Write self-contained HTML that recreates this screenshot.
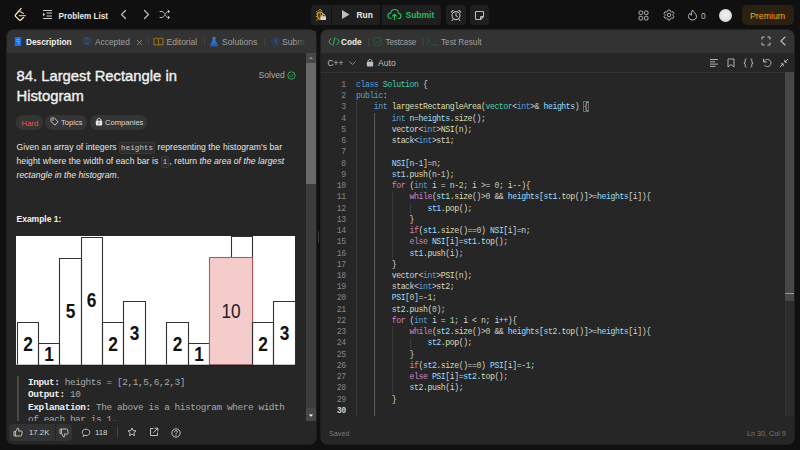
<!DOCTYPE html>
<html><head><meta charset="utf-8">
<style>
*{box-sizing:border-box;margin:0;padding:0}
html,body{width:800px;height:450px;overflow:hidden;background:#101010;font-family:"Liberation Sans",sans-serif;color:#eee}
.a{position:absolute}
.topbar{left:0;top:0;width:800px;height:29px;background:#101010}
.panel{background:#262626;border-radius:6px;overflow:hidden;box-shadow:0 0 0 0.5px #2e2e2e}
.tabs{left:0;top:0;right:0;height:23px;background:#333333}
.tab{position:absolute;top:0;height:23px;line-height:23px;font-size:8.6px;color:#9e9e9e;white-space:nowrap}
.sep{position:absolute;top:8px;width:1px;height:8px;background:#424242}
.btn{background:#1f1f1f;border-radius:3px}
.mono{font-family:"Liberation Mono",monospace}
.code{left:356px;top:79px;font-size:8.2px;letter-spacing:-0.45px;line-height:11.24px;white-space:pre;color:#d4d4d4}
.ln{left:320px;top:79px;width:25.7px;text-align:right;font-size:8.2px;letter-spacing:-0.45px;line-height:11.24px;white-space:pre;color:#858585}
.k{color:#569cd6}.t{color:#4ec9b0}.f{color:#dcdcaa}.v{color:#9cdcfe}.c{color:#c586c0}.n{color:#b5cea8}.b1{color:#ffd700}.b2{color:#da70d6}.b3{color:#179fff}
.code1{font-family:"Liberation Mono",monospace;font-size:7.5px;background:#2e2e2e;border:0.5px solid #3a3a3a;border-radius:2px;padding:1px 1px;color:#c8c8c8}
</style></head><body>
<!-- top bar -->
<div class="a topbar"></div>
<!-- logo -->
<svg class="a" style="left:12px;top:5px" width="16" height="18" viewBox="12 5 16 18">
  <path d="M21.2 8.4L15.6 14.7C15.1 15.2 15.1 15.9 15.6 16.4L18.8 19.6C19.5 20.3 20.6 20.3 21.3 19.6L23.6 17.6" fill="none" stroke="#f3e7cf" stroke-width="1.3" stroke-linecap="round" stroke-linejoin="round"/>
  <path d="M19.4 10.9L23.4 13.4" fill="none" stroke="#e8c27a" stroke-width="1.2" stroke-linecap="round"/>
  <path d="M19.2 15.6H25.4" fill="none" stroke="#d6b47a" stroke-width="1.2" stroke-linecap="round"/>
</svg>
<!-- problem list icon -->
<svg class="a" style="left:42px;top:9px" width="11" height="11" viewBox="0 0 11 11">
  <path d="M1 1.5H10M4.5 4H10M4.5 7H10M1 9.5H10" stroke="#cfcfcf" stroke-width="1.1"/>
  <path d="M1 3.6L3 5.5L1 7.4Z" fill="#cfcfcf"/>
</svg>
<div class="a" style="left:58.5px;top:10px;font-size:8.2px;line-height:13px;font-weight:bold;color:#e8e8e8">Problem List</div>
<svg class="a" style="left:119px;top:9px" width="10" height="11" viewBox="0 0 10 11"><path d="M6.5 1.5L2.5 5.5L6.5 9.5" fill="none" stroke="#bdbdbd" stroke-width="1.2" stroke-linecap="round" stroke-linejoin="round"/></svg>
<svg class="a" style="left:141px;top:9px" width="10" height="11" viewBox="0 0 10 11"><path d="M3.5 1.5L7.5 5.5L3.5 9.5" fill="none" stroke="#bdbdbd" stroke-width="1.2" stroke-linecap="round" stroke-linejoin="round"/></svg>
<svg class="a" style="left:159px;top:9px" width="12" height="11" viewBox="0 0 12 11">
  <path d="M1 2.5H3.2C5.5 2.5 6.5 8.5 8.8 8.5H10.5M1 8.5H3.2C4.2 8.5 4.8 7.5 5.3 6.5M6.7 4.5C7.2 3.5 7.8 2.5 8.8 2.5H10.5M9 1L10.5 2.5L9 4M9 7L10.5 8.5L9 10" fill="none" stroke="#bdbdbd" stroke-width="1" stroke-linecap="round" stroke-linejoin="round"/>
</svg>

<!-- center buttons -->
<div class="a btn" style="left:311px;top:5px;width:20px;height:19.5px;border-radius:4px 0 0 4px"></div>
<svg class="a" style="left:314px;top:8px" width="14" height="14" viewBox="314 8 14 14">
  <path d="M318.5 11.2C318.5 10.2 319.3 9.6 320.2 9.6C321.1 9.6 321.8 10.2 321.8 11.2" fill="none" stroke="#e0a826" stroke-width="1"/>
  <ellipse cx="320.2" cy="15.6" rx="2.6" ry="3.6" fill="none" stroke="#e0a826" stroke-width="1.1"/>
  <path d="M317.6 14H316.3M317.6 16.6H316.2M317.8 19L316.6 20.4M316.6 11.6L317.8 12.6M320.2 12V19" fill="none" stroke="#e0a826" stroke-width="0.9" stroke-linecap="round"/>
  <rect x="320.6" y="16.2" width="5.4" height="3.8" rx="0.6" fill="#d6d6d6"/>
  <path d="M321.7 16.4V15.4C321.7 13.7 324.9 13.7 324.9 15.4V16.4" fill="none" stroke="#d6d6d6" stroke-width="0.9"/>
</svg>
<div class="a btn" style="left:332px;top:5px;width:48px;height:19.5px;border-radius:0"></div>
<svg class="a" style="left:341px;top:9px" width="9" height="11" viewBox="0 0 9 11"><path d="M1 1L8.5 5.5L1 10Z" fill="#bdbdbd"/></svg>
<div class="a" style="left:356.5px;top:9px;font-size:8.4px;line-height:13px;font-weight:bold;color:#e8e8e8">Run</div>
<div class="a btn" style="left:381.5px;top:5px;width:59.5px;height:19.5px;border-radius:0 4px 4px 0"></div>
<svg class="a" style="left:387px;top:8px" width="15" height="13" viewBox="0 0 15 13">
  <path d="M4 10.5H3.5C2 10.5 1 9.3 1 7.8C1 6.3 2.2 5.2 3.6 5.2C4 3 5.6 1.5 7.6 1.5C9.8 1.5 11.4 3.2 11.5 5.3C13 5.4 14 6.5 14 8C14 9.4 12.9 10.5 11.5 10.5H11" fill="none" stroke="#2cbb5d" stroke-width="1.2" stroke-linecap="round"/>
  <path d="M7.5 11.5V6.2M5.6 8L7.5 6.1L9.4 8" fill="none" stroke="#2cbb5d" stroke-width="1.2" stroke-linecap="round" stroke-linejoin="round"/>
</svg>
<div class="a" style="left:405.5px;top:9px;font-size:8.5px;line-height:13px;font-weight:bold;color:#2cbb5d">Submit</div>
<div class="a btn" style="left:446px;top:5px;width:19.5px;height:19.5px;border-radius:4px"></div>
<svg class="a" style="left:449.5px;top:8.5px" width="12" height="12" viewBox="0 0 12 12">
  <circle cx="6" cy="6.6" r="4" fill="none" stroke="#bdbdbd" stroke-width="1.1"/>
  <path d="M6 4.6V6.8L7.3 7.6M1.3 3.2L3 1.5M10.7 3.2L9 1.5M3 10.6L2.2 11.4M9 10.6L9.8 11.4" fill="none" stroke="#bdbdbd" stroke-width="1.1" stroke-linecap="round"/>
</svg>
<div class="a btn" style="left:469.5px;top:5px;width:19.5px;height:19.5px;border-radius:4px"></div>
<svg class="a" style="left:474px;top:9.5px" width="11" height="11" viewBox="0 0 11 11">
  <path d="M1.5 2.2C1.5 1.8 1.8 1.5 2.2 1.5H8.8C9.2 1.5 9.5 1.8 9.5 2.2V6.5L6.5 9.5H2.2C1.8 9.5 1.5 9.2 1.5 8.8Z M6.5 9.5V7.2C6.5 6.8 6.8 6.5 7.2 6.5H9.5" fill="none" stroke="#bdbdbd" stroke-width="1.1" stroke-linejoin="round"/>
</svg>

<!-- right icons -->
<svg class="a" style="left:638px;top:9.5px" width="11" height="11" viewBox="0 0 11 11">
  <rect x="1" y="1" width="3.6" height="3.6" rx="1.2" fill="none" stroke="#bdbdbd" stroke-width="1"/>
  <rect x="6.4" y="1" width="3.6" height="3.6" rx="1.2" fill="none" stroke="#bdbdbd" stroke-width="1"/>
  <rect x="1" y="6.4" width="3.6" height="3.6" rx="1.2" fill="none" stroke="#bdbdbd" stroke-width="1"/>
  <rect x="6.4" y="6.4" width="3.6" height="3.6" rx="1.2" fill="none" stroke="#bdbdbd" stroke-width="1"/>
</svg>
<svg class="a" style="left:662.5px;top:9px" width="12" height="12" viewBox="0 0 12 12">
  <path d="M5 1H7L7.4 2.4L8.6 3.1L10 2.7L11 4.4L10 5.4V6.6L11 7.6L10 9.3L8.6 8.9L7.4 9.6L7 11H5L4.6 9.6L3.4 8.9L2 9.3L1 7.6L2 6.6V5.4L1 4.4L2 2.7L3.4 3.1L4.6 2.4Z" fill="none" stroke="#bdbdbd" stroke-width="0.9" stroke-linejoin="round"/>
  <circle cx="6" cy="6" r="1.7" fill="none" stroke="#bdbdbd" stroke-width="0.9"/>
</svg>
<svg class="a" style="left:687px;top:9px" width="11" height="12" viewBox="0 0 11 12">
  <path d="M5.5 1C6 3 9.5 4.5 9.5 7.5C9.5 9.7 7.7 11 5.5 11C3.3 11 1.5 9.7 1.5 7.5C1.5 6 2.3 5 3 4.3C3.2 5.5 3.8 6.2 4.3 6.3C4.3 4.2 4.8 2.5 5.5 1Z" fill="none" stroke="#bdbdbd" stroke-width="1" stroke-linejoin="round"/>
</svg>
<div class="a" style="left:701px;top:10px;font-size:8.3px;line-height:13px;color:#bdbdbd">0</div>
<div class="a" style="left:719px;top:8.5px;width:13px;height:13px;border-radius:50%;background:radial-gradient(circle at 50% 45%,#f2f2f2 0,#dedede 60%,#c4c4c4 100%)"></div>
<div class="a" style="left:741.5px;top:5px;width:52px;height:19.5px;border-radius:5px;background:#2a2113"></div>
<div class="a" style="left:750px;top:10px;font-size:8.8px;line-height:13px;color:#f5a623">Premium</div>


<!-- left panel -->
<div class="a panel" style="left:7px;top:30px;width:309px;height:413.5px">
  <div class="a tabs"></div>
</div>
<!-- left tabs -->
<svg class="a" style="left:14px;top:36px" width="8" height="11" viewBox="0 0 8 11">
  <path d="M1.2 1H6.8C7 1 7.2 1.2 7.2 1.4V9.6C7.2 9.8 7 10 6.8 10H1.2C1 10 0.8 9.8 0.8 9.6V1.4C0.8 1.2 1 1 1.2 1Z" fill="#1f6fe0"/>
  <path d="M2.6 3.6H5.4M2.6 5.5H5.4M4 7.4H5.4" stroke="#9cc4ff" stroke-width="0.8"/>
</svg>
<div class="a" style="left:26px;top:35.5px;font-size:8.3px;line-height:13px;font-weight:bold;color:#f0f0f0">Description</div>
<svg class="a" style="left:81px;top:35px" width="12" height="12" viewBox="0 0 12 12">
  <circle cx="6" cy="6" r="5.2" fill="#323c50"/>
  <path d="M3.5 4.5C4.5 3 7 3 8 4.5M4 7.8C5 8.8 7 8.8 8 7.5" fill="none" stroke="#465878" stroke-width="1"/>
</svg>
<div class="a" style="left:95px;top:35.5px;font-size:8.4px;line-height:13px;color:#a0a0a0">Accepted</div>
<svg class="a" style="left:135.5px;top:38.5px" width="7" height="7" viewBox="0 0 7 7"><path d="M1 1L6 6M6 1L1 6" stroke="#8a8a8a" stroke-width="0.9"/></svg>
<div class="sep" style="left:148px;top:38px"></div>
<svg class="a" style="left:153px;top:37px" width="11" height="9" viewBox="0 0 11 9">
  <path d="M1 1.2H4.2C4.8 1.2 5.5 1.7 5.5 2.3C5.5 1.7 6.2 1.2 6.8 1.2H10V7.8H6.8C6.2 7.8 5.5 8.2 5.5 8.2C5.5 8.2 4.8 7.8 4.2 7.8H1Z M5.5 2.3V8.2" fill="none" stroke="#957020" stroke-width="1.1" stroke-linejoin="round"/>
</svg>
<div class="a" style="left:166.5px;top:35.5px;font-size:8.5px;line-height:13px;color:#a0a0a0">Editorial</div>
<div class="sep" style="left:204px;top:38px"></div>
<svg class="a" style="left:209px;top:36px" width="10" height="11" viewBox="0 0 10 11">
  <defs><linearGradient id="fl" x1="0" y1="0" x2="0" y2="1"><stop offset="0" stop-color="#2a8fd0"/><stop offset="1" stop-color="#2a55b0"/></linearGradient></defs>
  <path d="M3.6 1H6.4V4L9 9.2C9.3 9.8 8.9 10.4 8.2 10.4H1.8C1.1 10.4 0.7 9.8 1 9.2L3.6 4Z" fill="url(#fl)"/>
</svg>
<div class="a" style="left:222px;top:35.5px;font-size:8.6px;line-height:13px;color:#a0a0a0">Solutions</div>
<div class="sep" style="left:264px;top:38px"></div>
<svg class="a" style="left:269.5px;top:36px" width="11" height="11" viewBox="0 0 11 11">
  <circle cx="5.5" cy="5.5" r="4.8" fill="#2c3a52"/>
  <path d="M5.5 3V5.8L7.2 6.8" fill="none" stroke="#4a5f85" stroke-width="1"/>
</svg>
<div class="a" style="left:282px;top:35.5px;font-size:8.6px;line-height:13px;color:#a0a0a0;width:30px;overflow:hidden;white-space:nowrap">Submissions</div>
<div class="a" style="left:294px;top:31px;width:22px;height:21px;background:linear-gradient(90deg,rgba(51,51,51,0),#333 55%)"></div>

<!-- scrollbar -->
<div class="a" style="left:306px;top:53px;width:10px;height:368px;background:#3c3c3c"></div>
<div class="a" style="left:306px;top:53px;width:10px;height:10px;background:#474747"></div>
<div class="a" style="left:306px;top:63px;width:10px;height:121px;background:#696969"></div>
<svg class="a" style="left:306px;top:53px" width="10" height="10" viewBox="0 0 10 10"><path d="M3 6L5 4L7 6Z" fill="#9a9a9a"/></svg>
<div class="a" style="left:306px;top:408px;width:10px;height:13px;background:#474747"></div>
<svg class="a" style="left:306px;top:410px" width="10" height="10" viewBox="0 0 10 10"><path d="M2.8 4.5L5 6.8L7.2 4.5Z" fill="#ffffff"/></svg>

<!-- title -->
<div class="a" style="left:16.5px;top:67px;font-size:14.8px;line-height:19.6px;color:#f2f2f2;-webkit-text-stroke:0.35px #f2f2f2;white-space:nowrap">84. Largest Rectangle in<br>Histogram</div>
<div class="a" style="left:258.5px;top:69.3px;font-size:8.6px;line-height:13px;color:#a8a8a8">Solved</div>
<svg class="a" style="left:287px;top:71px" width="9" height="9" viewBox="0 0 9 9">
  <circle cx="4.5" cy="4.5" r="3.7" fill="none" stroke="#2cbb5d" stroke-width="0.9"/>
  <path d="M2.8 4.6L4 5.8L6.3 3.4" fill="none" stroke="#2cbb5d" stroke-width="0.9" stroke-linecap="round" stroke-linejoin="round"/>
</svg>

<!-- badges -->
<div class="a" style="left:16px;top:115px;width:27px;height:14.5px;border-radius:7px;background:#353535"></div>
<div class="a" style="left:21.5px;top:116.5px;font-size:7.8px;line-height:13px;color:#e05a5a">Hard</div>
<div class="a" style="left:45px;top:115px;width:41.5px;height:14.5px;border-radius:7px;background:#353535"></div>
<svg class="a" style="left:49.5px;top:117px" width="9" height="9" viewBox="0 0 9 9">
  <path d="M1 1.5V4.3L4.9 8.2L8.2 4.9L4.3 1H1.5Z" fill="none" stroke="#dadada" stroke-width="0.9" stroke-linejoin="round"/>
  <circle cx="3" cy="3" r="0.7" fill="#dadada"/>
</svg>
<div class="a" style="left:61px;top:116px;font-size:7.6px;line-height:13px;color:#dadada">Topics</div>
<div class="a" style="left:89.5px;top:115px;width:57.5px;height:14.5px;border-radius:7px;background:#353535"></div>
<svg class="a" style="left:94.5px;top:117px" width="8" height="9" viewBox="0 0 8 9">
  <rect x="0.8" y="3.8" width="6.4" height="4.6" rx="0.8" fill="#e8e8e8"/>
  <path d="M2.2 4V2.9C2.2 0.9 5.8 0.9 5.8 2.9V4" fill="none" stroke="#e8e8e8" stroke-width="1"/>
  <circle cx="4" cy="6" r="0.7" fill="#353535"/>
</svg>
<div class="a" style="left:105px;top:116px;font-size:7.6px;line-height:13px;color:#dadada">Companies</div>

<!-- body -->
<div class="a" style="left:16.5px;top:140.8px;width:290px;letter-spacing:0.07px;font-size:8.55px;line-height:13px;color:#e6e6e6;white-space:nowrap">Given an array of integers <span class="code1">heights</span> representing the histogram's bar<br>height where the width of each bar is <span class="code1">1</span>, return <i>the area of the largest</i><br><i>rectangle in the histogram</i>.</div>

<div class="a" style="left:16.5px;top:213.3px;font-size:8.5px;line-height:13px;font-weight:bold;color:#f2f2f2">Example 1:</div>

<!-- histogram image -->
<div class="a" style="left:16px;top:236px;width:279.3px;height:129px;background:#ffffff"></div>
<svg class="a" style="left:16px;top:236px" width="280" height="130" viewBox="16 236 280 130">
  <path d="M17.5 364.5V322.5H38.5V365" fill="none" stroke="#333" stroke-width="1.1"/>
  <path d="M38.5 364.5V343.5H59.5V365" fill="none" stroke="#333" stroke-width="1.1"/>
  <path d="M59.5 364.5V258.5H81.5V365" fill="none" stroke="#333" stroke-width="1.1"/>
  <path d="M81.5 364.5V237.5H102.5V365" fill="none" stroke="#333" stroke-width="1.1"/>
  <path d="M102.5 364.5V322.5H123.5V365" fill="none" stroke="#333" stroke-width="1.1"/>
  <path d="M123.5 364.5V301.5H145.5V365" fill="none" stroke="#333" stroke-width="1.1"/>
  <path d="M166.5 364.5V322.5H188.5V365" fill="none" stroke="#333" stroke-width="1.1"/>
  <path d="M188.5 364.5V343.5H209.5V365" fill="none" stroke="#333" stroke-width="1.1"/>
  <path d="M231.5 364.5V236.5H252.5V365" fill="none" stroke="#333" stroke-width="1.1"/>
  <rect x="209.5" y="257.5" width="43" height="107.5" fill="#f4cccc" stroke="#b05a5a" stroke-width="1.1"/>
  <path d="M252.5 364.5V322.5H273.5V365" fill="none" stroke="#333" stroke-width="1.1"/>
  <path d="M273.5 364.5V301.5H295.5V365" fill="none" stroke="#333" stroke-width="1.1"/>
  <line x1="16" y1="365.3" x2="296" y2="365.3" stroke="#1c1c1c" stroke-width="1.2"/>
  <g font-family="Liberation Sans" font-weight="bold" font-size="17.3" fill="#111" text-anchor="middle">
    <text transform="translate(28 350.5) scale(1 1.19)">2</text>
    <text transform="translate(49 361) scale(1 1.19)">1</text>
    <text transform="translate(70.5 318) scale(1 1.19)">5</text>
    <text transform="translate(91.5 307) scale(1 1.19)">6</text>
    <text transform="translate(113 350.5) scale(1 1.19)">2</text>
    <text transform="translate(134.5 340) scale(1 1.19)">3</text>
    <text transform="translate(177.5 350.5) scale(1 1.19)">2</text>
    <text transform="translate(199 361) scale(1 1.19)">1</text>
    <text transform="translate(263 350.5) scale(1 1.19)">2</text>
    <text transform="translate(284.5 340) scale(1 1.19)">3</text>
  </g>
  <text transform="translate(231 318) scale(1 1.19)" font-family="Liberation Sans" font-size="17.3" fill="#222" text-anchor="middle">10</text>
</svg>

<!-- example block -->
<div class="a" style="left:17px;top:376px;width:1.5px;height:46px;background:#4a4a4a"></div>
<div class="a mono" style="left:28px;top:377.2px;font-size:9.4px;letter-spacing:-0.39px;line-height:12.3px;color:#a8a8a8;white-space:pre"><b style="color:#f0f0f0">Input:</b> heights = [2,1,5,6,2,3]
<b style="color:#f0f0f0">Output:</b> 10
<b style="color:#f0f0f0">Explanation:</b> The above is a histogram where width
of each bar is 1.</div>

<!-- footer -->
<div class="a" style="left:7px;top:421px;width:299px;height:22px;background:#262626;border-radius:0 0 0 6px"></div>
<div class="a" style="left:9px;top:424px;width:63px;height:16.5px;border-radius:4px;background:#333333"></div>
<div class="a" style="left:54.5px;top:424px;width:1px;height:16.5px;background:#262626"></div>
<svg class="a" style="left:13px;top:427px" width="10" height="10" viewBox="0 0 10 10">
  <path d="M1 4.5H2.6V9H1Z M2.6 4.5L4.6 1C5.6 1 6 1.7 5.8 2.5L5.4 4H8.3C8.9 4 9.3 4.5 9.2 5.1L8.6 8.2C8.5 8.7 8.1 9 7.6 9H2.6" fill="none" stroke="#cfcfcf" stroke-width="0.9" stroke-linejoin="round"/>
</svg>
<div class="a" style="left:29px;top:426px;font-size:7.8px;line-height:13px;color:#d6d6d6">17.2K</div>
<svg class="a" style="left:58.5px;top:427.5px" width="10" height="10" viewBox="0 0 10 10">
  <path d="M1 5.5H2.6V1H1Z M2.6 5.5L4.6 9C5.6 9 6 8.3 5.8 7.5L5.4 6H8.3C8.9 6 9.3 5.5 9.2 4.9L8.6 1.8C8.5 1.3 8.1 1 7.6 1H2.6" fill="none" stroke="#cfcfcf" stroke-width="0.9" stroke-linejoin="round"/>
</svg>
<svg class="a" style="left:80.5px;top:427.5px" width="10" height="10" viewBox="0 0 10 10">
  <path d="M2.2 8.6L2.8 6.9C2.2 6.3 1.2 5.6 1.2 4.4C1.2 2.5 3 1.2 5 1.2C7 1.2 8.8 2.5 8.8 4.4C8.8 6.3 7 7.6 5 7.6C4.4 7.6 3.8 7.5 3.3 7.3Z" fill="none" stroke="#cfcfcf" stroke-width="0.9" stroke-linejoin="round"/>
</svg>
<div class="a" style="left:95px;top:426px;font-size:7.8px;line-height:13px;color:#d6d6d6">118</div>
<div class="a" style="left:117px;top:427px;width:1px;height:10px;background:#444"></div>
<svg class="a" style="left:126.5px;top:427px" width="10" height="10" viewBox="0 0 10 10">
  <path d="M5 1L6.2 3.6L9 3.9L6.9 5.8L7.5 8.7L5 7.2L2.5 8.7L3.1 5.8L1 3.9L3.8 3.6Z" fill="none" stroke="#cfcfcf" stroke-width="0.9" stroke-linejoin="round"/>
</svg>
<svg class="a" style="left:148.5px;top:427px" width="10" height="10" viewBox="0 0 10 10">
  <path d="M4 1.5H1.5V8.5H8.5V6M6 1.2H8.8V4M8.6 1.4L4.5 5.5" fill="none" stroke="#cfcfcf" stroke-width="0.9" stroke-linecap="round" stroke-linejoin="round"/>
</svg>
<svg class="a" style="left:171px;top:428px" width="10" height="10" viewBox="0 0 10 10">
  <circle cx="5" cy="5" r="4.2" fill="none" stroke="#cfcfcf" stroke-width="0.9"/>
  <path d="M3.6 3.8C3.6 3 4.2 2.5 5 2.5C5.8 2.5 6.4 3 6.4 3.8C6.4 4.7 5 4.8 5 5.9" fill="none" stroke="#cfcfcf" stroke-width="0.9" stroke-linecap="round"/>
  <circle cx="5" cy="7.4" r="0.55" fill="#cfcfcf"/>
</svg>
<div class="a" style="left:317.8px;top:231px;width:1.2px;height:12px;border-radius:1px;background:#3a3a3a"></div>
<!-- right panel -->
<div class="a panel" style="left:321px;top:30px;width:473px;height:413.5px">
  <div class="a tabs"></div>
</div>
<!-- right tabs -->
<svg class="a" style="left:327.5px;top:37px" width="12" height="9" viewBox="0 0 12 9">
  <path d="M3 1.5L0.8 4.5L3 7.5M9 1.5L11.2 4.5L9 7.5M7 0.8L5 8.2" fill="none" stroke="#2cbb5d" stroke-width="1" stroke-linecap="round" stroke-linejoin="round"/>
</svg>
<div class="a" style="left:341px;top:35.5px;font-size:8.2px;line-height:13px;font-weight:bold;color:#f0f0f0">Code</div>
<div class="sep" style="left:368px;top:38px"></div>
<svg class="a" style="left:373px;top:37px" width="9" height="9" viewBox="0 0 9 9">
  <rect x="0.8" y="0.8" width="7.4" height="7.4" rx="1.5" fill="none" stroke="#1d5c33" stroke-width="1.1"/>
  <path d="M2.6 4.6L3.9 5.8L6.3 3.3" fill="none" stroke="#1d5c33" stroke-width="1"/>
</svg>
<div class="a" style="left:385.5px;top:35.5px;font-size:8.2px;letter-spacing:-0.2px;line-height:13px;color:#a0a0a0">Testcase</div>
<div class="sep" style="left:423px;top:38px"></div>
<svg class="a" style="left:426px;top:37px" width="13" height="9" viewBox="0 0 13 9">
  <path d="M1 1.5L3.6 4.5L1 7.5" fill="none" stroke="#1d5c33" stroke-width="1.1" stroke-linecap="round" stroke-linejoin="round"/>
  <path d="M5.5 8H12" stroke="#1d5c33" stroke-width="1.1" stroke-linecap="round"/>
</svg>
<div class="a" style="left:441px;top:35.5px;font-size:8.2px;line-height:13px;color:#a0a0a0">Test Result</div>
<svg class="a" style="left:761px;top:36px" width="10" height="10" viewBox="0 0 10 10">
  <path d="M1 3.5V1H3.5M6.5 1H9V3.5M9 6.5V9H6.5M3.5 9H1V6.5" fill="none" stroke="#bdbdbd" stroke-width="1"/>
</svg>
<svg class="a" style="left:779px;top:36px" width="8" height="10" viewBox="0 0 8 10">
  <path d="M6 1L2 5L6 9" fill="none" stroke="#bdbdbd" stroke-width="1.1" stroke-linecap="round" stroke-linejoin="round"/>
</svg>

<!-- toolbar -->
<div class="a" style="left:321px;top:71.5px;width:473px;height:1px;background:#333"></div>
<div class="a" style="left:327.5px;top:56.5px;font-size:8.4px;line-height:13px;color:#bdbdbd">C++</div>
<svg class="a" style="left:348px;top:59px" width="9" height="8" viewBox="0 0 9 8"><path d="M1.5 2.5L4.5 5.5L7.5 2.5" fill="none" stroke="#8a8a8a" stroke-width="1"/></svg>
<svg class="a" style="left:366px;top:58px" width="8" height="9" viewBox="0 0 8 9">
  <rect x="0.8" y="3.8" width="6.4" height="4.6" rx="0.8" fill="#bdbdbd"/>
  <path d="M2.2 4V2.9C2.2 0.9 5.8 0.9 5.8 2.9V4" fill="none" stroke="#bdbdbd" stroke-width="1"/>
</svg>
<div class="a" style="left:378px;top:56.5px;font-size:8.6px;line-height:13px;color:#bdbdbd">Auto</div>
<svg class="a" style="left:708.5px;top:57.5px" width="10" height="10" viewBox="0 0 10 10"><path d="M1 1.5H9M1 3.8H6M1 6.1H9M1 8.4H6.5" stroke="#bdbdbd" stroke-width="0.9"/></svg>
<svg class="a" style="left:727px;top:57.5px" width="8" height="10" viewBox="0 0 8 10"><path d="M1 1H7V9L4 6.5L1 9Z" fill="none" stroke="#bdbdbd" stroke-width="0.9" stroke-linejoin="round"/></svg>
<svg class="a" style="left:743px;top:57.5px" width="11" height="10" viewBox="0 0 11 10"><path d="M3.4 0.8C2.5 0.8 2.2 1.3 2.2 2.1V3.7C2.2 4.3 1.8 4.9 0.9 5C1.8 5.1 2.2 5.7 2.2 6.3V7.9C2.2 8.7 2.5 9.2 3.4 9.2M7.6 0.8C8.5 0.8 8.8 1.3 8.8 2.1V3.7C8.8 4.3 9.2 4.9 10.1 5C9.2 5.1 8.8 5.7 8.8 6.3V7.9C8.8 8.7 8.5 9.2 7.6 9.2" fill="none" stroke="#bdbdbd" stroke-width="1" stroke-linejoin="round"/></svg>
<svg class="a" style="left:761.5px;top:57.5px" width="10" height="10" viewBox="0 0 10 10"><path d="M1.5 1V4H4.5M1.8 3.8C2.5 2.3 3.9 1.4 5.4 1.4C7.4 1.4 9 3 9 5C9 7 7.4 8.6 5.4 8.6C4.3 8.6 3.4 8.2 2.7 7.5" fill="none" stroke="#bdbdbd" stroke-width="0.9" stroke-linecap="round"/></svg>
<svg class="a" style="left:779px;top:57.5px" width="10" height="10" viewBox="0 0 10 10"><path d="M9 1L5.8 4.2M5.8 1.8V4.2H8.2M1 9L4.2 5.8M1.8 5.8H4.2V8.2" fill="none" stroke="#bdbdbd" stroke-width="0.9"/></svg>

<!-- guides -->
<div class="a" style="left:356.30px;top:101.48px;width:0.8px;height:314.72px;background:#3a3a3a"></div>
<div class="a" style="left:374.18px;top:112.72px;width:0.8px;height:303.48px;background:#5a5a5a"></div>
<div class="a" style="left:392.06px;top:191.40px;width:0.8px;height:67.44px;background:#3a3a3a"></div>
<div class="a" style="left:392.06px;top:326.28px;width:0.8px;height:67.44px;background:#3a3a3a"></div>
<div class="a" style="left:409.94px;top:202.64px;width:0.8px;height:11.24px;background:#3a3a3a"></div>
<div class="a" style="left:409.94px;top:337.52px;width:0.8px;height:11.24px;background:#3a3a3a"></div>
<!-- code -->
<div class="a mono ln">1
2
3
4
5
6
7
8
9
10
11
12
13
14
15
16
17
18
19
20
21
22
23
24
25
26
27
28
29
<b style="color:#d0d0d0">30</b></div>
<div class="a mono code"><span class="k">class</span> <span class="t">Solution</span> {
<span class="k">public</span>:
    <span class="k">int</span> <span class="f">largestRectangleArea</span><span class="f">(</span><span class="t">vector</span>&lt;<span class="k">int</span>&gt;&amp; <span class="v">heights</span>) <span style="outline:0.8px solid #6a6a6a;outline-offset:-0.2px">{</span>
        <span class="k">int</span> n=<span class="v">heights</span><span class="f">.</span><span class="f">size</span>();
        vector&lt;<span class="k">int</span>&gt;<span class="f">NSI</span>(n);
        stack&lt;<span class="k">int</span>&gt;st1;

        <span class="v">NSI</span>[n-<span class="n">1</span>]=n;
        <span class="v">st1</span><span class="f">.</span><span class="f">push</span>(n-<span class="n">1</span>);
        <span class="c">for</span> (<span class="k">int</span> i = n-<span class="n">2</span>; i &gt;= <span class="n">0</span>; i--){
            <span class="c">while</span>(<span class="v">st1</span><span class="f">.</span><span class="f">size</span>()&gt;<span class="n">0</span> &amp;&amp; <span class="v">heights</span>[<span class="v">st1</span><span class="f">.</span><span class="f">top</span>()]&gt;=<span class="v">heights</span>[i]){
                <span class="v">st1</span><span class="f">.</span><span class="f">pop</span>();
            }
            <span class="c">if</span>(<span class="v">st1</span><span class="f">.</span><span class="f">size</span>()==<span class="n">0</span>) <span class="v">NSI</span>[i]=n;
            <span class="c">else</span> <span class="v">NSI</span>[i]=<span class="v">st1</span><span class="f">.</span><span class="f">top</span>();
            <span class="v">st1</span><span class="f">.</span><span class="f">push</span>(i);
        }
        vector&lt;<span class="k">int</span>&gt;<span class="f">PSI</span>(n);
        stack&lt;<span class="k">int</span>&gt;st2;
        <span class="v">PSI</span>[<span class="n">0</span>]=-<span class="n">1</span>;
        <span class="v">st2</span><span class="f">.</span><span class="f">push</span>(<span class="n">0</span>);
        <span class="c">for</span> (<span class="k">int</span> i = <span class="n">1</span>; i &lt; n; i++){
            <span class="c">while</span>(<span class="v">st2</span><span class="f">.</span><span class="f">size</span>()&gt;<span class="n">0</span> &amp;&amp; <span class="v">heights</span>[<span class="v">st2</span><span class="f">.</span><span class="f">top</span>()]&gt;=<span class="v">heights</span>[i]){
                <span class="v">st2</span><span class="f">.</span><span class="f">pop</span>();
            }
            <span class="c">if</span>(<span class="v">st2</span><span class="f">.</span><span class="f">size</span>()==<span class="n">0</span>) <span class="v">PSI</span>[i]=-<span class="n">1</span>;
            <span class="c">else</span> <span class="v">PSI</span>[i]=<span class="v">st2</span><span class="f">.</span><span class="f">top</span>();
            <span class="v">st2</span><span class="f">.</span><span class="f">push</span>(i);
        }
        </div>
<!-- editor scrollbar -->
<div class="a" style="left:785px;top:72px;width:9px;height:344px;background:#2c2c2c;border-left:1px solid #333"></div>
<div class="a" style="left:785px;top:72px;width:9px;height:229px;background:#474747"></div>
<div class="a" style="left:785px;top:292.5px;width:9px;height:1.5px;background:#9a9a9a"></div>

<!-- status -->
<div class="a" style="left:329px;top:427px;font-size:7.2px;line-height:13px;color:#7a7a7a">Saved</div>
<div class="a" style="left:747px;top:427px;font-size:7.2px;line-height:13px;color:#7a7a7a">Ln 30, Col 9</div>
</body></html>
